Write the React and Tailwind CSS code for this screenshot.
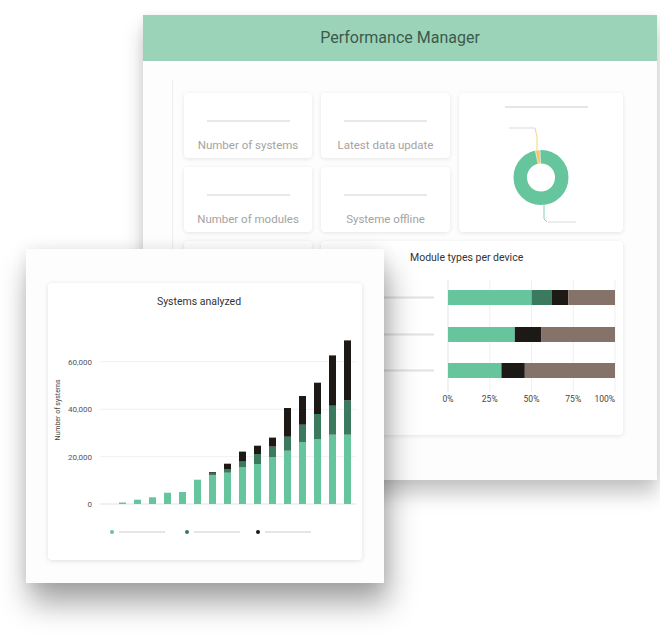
import React from 'react';

const GREEN = '#66c59c';
const DARK_GREEN = '#3b7a5e';
const BLACK = '#1c1916';
const BROWN = '#857369';
const YELLOW = '#f5c56b';

// stacked heights in px: [green, dark green, black]
const systemBars = [
  [1.5, 0, 0],
  [4.3, 0, 0],
  [6.7, 0, 0],
  [11.3, 0, 0],
  [12, 0, 0],
  [24.3, 0, 0],
  [29, 1.4, 1.4],
  [31.3, 3.7, 5.3],
  [36.7, 5.7, 10],
  [40, 10, 8.3],
  [46.7, 10.7, 9],
  [53.3, 14, 28.7],
  [62, 17.3, 28.7],
  [64.7, 25.3, 31.3],
  [69.3, 29, 50.3],
  [69.3, 34.3, 60],
];

// module shares in % per device
const moduleBars = [
  [[50, GREEN], [12, DARK_GREEN], [10, BLACK], [28, BROWN]],
  [[40, GREEN], [16, BLACK], [44, BROWN]],
  [[32, GREEN], [14, BLACK], [54, BROWN]],
];

const font = { fontFamily: 'Roboto, "Noto Sans", sans-serif' };

function polar(cx, cy, r, deg) {
  const a = (deg * Math.PI) / 180;
  return [cx + r * Math.sin(a), cy - r * Math.cos(a)];
}

function wedge(cx, cy, r1, r2, from, to) {
  const [x1, y1] = polar(cx, cy, r2, from);
  const [x2, y2] = polar(cx, cy, r2, to);
  const [x3, y3] = polar(cx, cy, r1, to);
  const [x4, y4] = polar(cx, cy, r1, from);
  return `M${x1} ${y1} A${r2} ${r2} 0 0 1 ${x2} ${y2} L${x3} ${y3} A${r1} ${r1} 0 0 0 ${x4} ${y4} Z`;
}

function StatCard({ label }) {
  return (
    <div className="bg-white rounded-[4px] shadow-[0_1px_4px_rgba(0,0,0,0.1)] flex flex-col items-center pt-[27px]">
      <div className="h-[2px] w-[83px] bg-[#e8e8e8]" />
      <div className="mt-[16px] text-[11.5px] leading-[14px] text-[#a3a3a3]">{label}</div>
    </div>
  );
}

function DonutCard() {
  return (
    <div className="row-span-2 bg-white rounded-[4px] shadow-[0_1px_4px_rgba(0,0,0,0.1)]">
      <svg width="164" height="140" className="block">
        <line x1="46" y1="14" x2="129" y2="14" stroke="#e6e6e6" strokeWidth="2" />
        <circle cx="82" cy="84.5" r="20.75" fill="none" stroke={GREEN} strokeWidth="13.5" />
        <path d={wedge(82, 84.5, 14, 27.5, -12, -2)} fill={YELLOW} stroke="#fff" strokeWidth="0.6" />
        <polyline points="78,57 78,44 76,35" fill="none" stroke={YELLOW} strokeWidth="0.8" />
        <line x1="50" y1="35" x2="76" y2="35" stroke="#e6e6e6" strokeWidth="1.5" />
        <polyline points="85,112 85,126 88,129" fill="none" stroke={GREEN} strokeWidth="0.8" />
        <line x1="89" y1="129" x2="117" y2="129" stroke="#e6e6e6" strokeWidth="1.5" />
      </svg>
    </div>
  );
}

function ModuleCard() {
  const grid = [0, 25, 50, 75, 100];
  return (
    <div className="col-span-2 bg-white rounded-[4px] shadow-[0_1px_4px_rgba(0,0,0,0.1)] flex flex-col">
      <div className="pt-[10px] h-[30px] pl-[89px] text-[10.5px] leading-[14px] text-[#333]">
        Module types per device
      </div>
      <svg width="302" height="164" className="block overflow-visible">
        {grid.map((g) => (
          <line
            key={g}
            x1={127 + (g / 100) * 167}
            y1="9"
            x2={127 + (g / 100) * 167}
            y2="121"
            stroke={g === 0 ? '#dde3ee' : '#f0f0f0'}
            strokeWidth="1"
          />
        ))}
        {moduleBars.map((bar, i) => {
          const y = [19, 56, 92][i];
          let acc = 0;
          return (
            <g key={i}>
              <line x1="40" y1={y + 7.5} x2="113" y2={y + 7.5} stroke="#e2e2e2" strokeWidth="2" />
              {bar.map(([pct, color], j) => {
                const x = 127 + (acc / 100) * 167;
                acc += pct;
                return <rect key={j} x={x} y={y} width={(pct / 100) * 167} height="15" fill={color} />;
              })}
            </g>
          );
        })}
        {grid.map((g) => (
          <text
            key={g}
            x={g === 100 ? 294 : 127 + (g / 100) * 167}
            y="131"
            textAnchor={g === 100 ? 'end' : 'middle'}
            fontSize="8.5"
            fill="#444"
            style={font}
          >
            {g}%
          </text>
        ))}
      </svg>
    </div>
  );
}

function SystemsChart() {
  const ticks = [
    [0, 194],
    [20000, 146.7],
    [40000, 99.3],
    [60000, 51.7],
  ];
  const legend = [
    [64, GREEN],
    [139, DARK_GREEN],
    [210, BLACK],
  ];
  return (
    <svg width="314" height="240" className="block">
      {ticks.map(([v, y]) => (
        <g key={v}>
          <line x1="52" y1={y} x2="308" y2={y} stroke={v === 0 ? '#dde3ee' : '#f1f1f1'} strokeWidth="1" />
          <text x="44" y={y + 3} textAnchor="end" fontSize="8" fill="#555" style={font}>
            {v.toLocaleString('en-US')}
          </text>
        </g>
      ))}
      <text
        x="12"
        y="100"
        fontSize="7"
        fill="#444"
        textAnchor="middle"
        transform="rotate(-90 12 100)"
        style={font}
      >
        Number of systems
      </text>
      {systemBars.map(([g, d, b], i) => {
        const x = 71 + 15 * i;
        return (
          <g key={i}>
            <rect x={x} y={194 - g} width="7" height={g} fill={GREEN} />
            {d > 0 && <rect x={x} y={194 - g - d} width="7" height={d} fill={DARK_GREEN} />}
            {b > 0 && <rect x={x} y={194 - g - d - b} width="7" height={b} fill={BLACK} />}
          </g>
        );
      })}
      {legend.map(([x, color]) => (
        <g key={x}>
          <circle cx={x} cy="222" r="2" fill={color} />
          <line x1={x + 7} y1="222" x2={x + 53} y2="222" stroke="#dddddd" strokeWidth="1.5" />
        </g>
      ))}
    </svg>
  );
}

export default function App() {
  return (
    <div className="relative w-[660px] h-[634px] bg-white overflow-hidden" style={font}>
      {/* Back window */}
      <div className="absolute left-[143px] top-[15px] w-[514px] h-[465px] bg-[#fdfdfd] shadow-[0_14px_18px_rgba(0,0,0,0.22),0_0_8px_rgba(0,0,0,0.06)] flex flex-col">
        <div className="h-[46px] bg-[#9bd3b9] flex items-center justify-center text-[16px] text-[#3b5a4d]">
          Performance Manager
        </div>
        <div className="flex-1 pl-[29px] pt-[19px] flex">
          <div className="flex-1 border-l border-[#efefef] pl-[11px] pt-[13px]">
            <div className="grid grid-cols-[128px_129px_164px] grid-rows-[65px_65px_194px] gap-[9px]">
              <StatCard label="Number of systems" />
              <StatCard label="Latest data update" />
              <DonutCard />
              <StatCard label="Number of modules" />
              <StatCard label="Systeme offline" />
              <div className="bg-white rounded-[4px] shadow-[0_1px_4px_rgba(0,0,0,0.1)]" />
              <ModuleCard />
            </div>
          </div>
        </div>
      </div>

      {/* Front window */}
      <div className="absolute left-[26px] top-[249px] w-[358px] h-[334px] bg-[#fdfdfd] shadow-[4px_20px_28px_rgba(0,0,0,0.36),0_0_14px_rgba(0,0,0,0.08)] pt-[34px] px-[22px]">
        <div className="h-[277px] bg-white rounded-[4px] shadow-[0_1px_5px_rgba(0,0,0,0.12)] flex flex-col">
          <div className="pt-[12px] h-[27px] pr-[12px] text-center text-[10.5px] leading-[14px] text-[#333]">
            Systems analyzed
          </div>
          <SystemsChart />
        </div>
      </div>
    </div>
  );
}
